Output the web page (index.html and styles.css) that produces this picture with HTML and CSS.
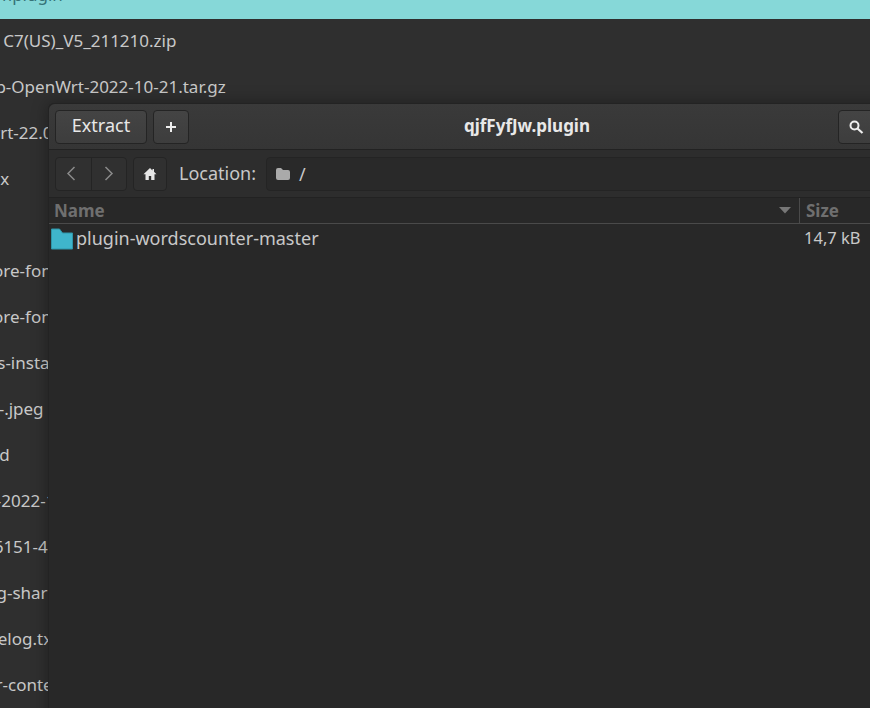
FILE: index.html
```html
<!DOCTYPE html>
<html lang="en">
  <head>
    <meta charset="UTF-8" />
    <title>qjfFyfJw.plugin</title>
    <link rel="stylesheet" href="styles.css">
  </head>
  <body>
    <!-- file manager behind the dialog -->
    <div class="files">
      <div class="file selected">Telecomplugin</div>
      <div class="file">Archer C7(US)_V5_211210.zip</div>
      <div class="file">ipk-app-OpenWrt-2022-10-21.tar.gz</div>
      <div class="file">openwrt-22.03.2-x86</div>
      <div class="file">mylinux</div>
      <div class="file"></div>
      <div class="file">rpm-core-fonts-a</div>
      <div class="file">rpm-core-fonts-b</div>
      <div class="file">addons-installer</div>
      <div class="file">screen-.jpeg</div>
      <div class="file">Android</div>
      <div class="file">image-2022-10-21</div>
      <div class="file">photo6151-4852</div>
      <div class="file">logging-sharing</div>
      <div class="file">Changelog.txt</div>
      <div class="file">Docker-content</div>
    </div>

    <div class="window">
      <div class="headerbar">
        <button class="btn btn-text"><span class="lift">Extract</span></button>
        <button class="btn btn-icon">
          <svg width="12" height="12" viewBox="0 0 12 12"><path d="M5 1h2v4h4v2H7v4H5V7H1V5h4z" fill="#eee"/></svg>
        </button>
        <div class="title">qjfFyfJw.plugin</div>
        <button class="btn btn-search">
          <svg width="16" height="16" viewBox="0 0 16 16" fill="none" stroke="#eee"><circle cx="6.5" cy="6.5" r="4" stroke-width="2"/><path d="M9.5 9.5l5 4.5" stroke-width="2.2"/></svg>
        </button>
      </div>

      <div class="toolbar">
        <div class="nav-group">
          <button class="nav-btn nav-back">
            <svg width="10" height="15" viewBox="0 0 10 15" fill="none" stroke="#8a8a8a" stroke-width="1.5"><path d="M8.5 1L2 7.5 8.5 14"/></svg>
          </button>
          <button class="nav-btn">
            <svg width="10" height="15" viewBox="0 0 10 15" fill="none" stroke="#8a8a8a" stroke-width="1.5"><path d="M1.5 1L8 7.5 1.5 14"/></svg>
          </button>
        </div>
        <button class="nav-home">
          <svg width="14" height="14" viewBox="0 0 14 14"><path d="M7 1L0.5 7.2H2.5V13H5.8V9H8.2V13H11.5V7.2H13.5L11 4.8V2H9.5V3.4z" fill="#e6e6e6"/></svg>
        </button>
        <span class="location-label">Location:</span>
        <div class="location">
          <svg width="16" height="14" viewBox="0 0 16 14"><path d="M1 3a2 2 0 0 1 2-2h3l2 2h5a2 2 0 0 1 2 2v6a2 2 0 0 1-2 2H3a2 2 0 0 1-2-2z" fill="#aaa"/></svg>
          <span>/</span>
        </div>
      </div>

      <div class="columns">
        <div class="col-name">
          <span>Name</span>
          <svg width="12" height="7" viewBox="0 0 12 7"><path d="M0 0h12L6 6.5z" fill="#777"/></svg>
        </div>
        <div class="col-size">Size</div>
      </div>

      <div class="row">
        <div class="row-name">
          <svg width="22" height="22" viewBox="0 0 22 22"><path d="M0.5 1h8l3 4h10v16h-21z" fill="#3fb5cb" stroke="#2e95a8"/></svg>
          <span class="lift">plugin-wordscounter-master</span>
        </div>
        <div class="row-size"><span class="lift">14,7 kB</span></div>
      </div>
    </div>
  </body>
</html>
```

FILE: styles.css
```css
body {
  margin: 0;
  height: 708px;
  overflow: hidden;
  position: relative;
  background: #2f2f2f;
  font-family: "Noto Sans", sans-serif;
  font-size: 18px;
  color: #c8c8c8;
}

button {
  font: inherit;
  color: inherit;
  padding: 0;
}

.lift {
  margin-bottom: 3px;
}

.files {
  margin-top: -28px;
}

.file {
  height: 46px;
  line-height: 46px;
  font-size: 17px;
  text-indent: -54px;
  white-space: nowrap;
}

.file.selected {
  height: 47px;
  margin-bottom: -1px;
  background: #86d8d8;
  color: #357377;
}

.window {
  position: absolute;
  top: 103px;
  left: 48px;
  width: 956px;
  height: 640px;
  background: #282828;
  border-top: 1px solid #232323;
  border-left: 1px solid #232323;
  border-radius: 6px 6px 0 0;
  box-shadow: 0 0 16px rgba(0, 0, 0, 0.35);
}

.headerbar {
  height: 45px;
  display: flex;
  align-items: center;
  gap: 6px;
  padding: 0 6px;
  position: relative;
  background: linear-gradient(to bottom, #3a3a3a, #353535);
  border-bottom: 1px solid #222;
  border-radius: 6px 6px 0 0;
}

.btn {
  height: 34px;
  border: 1px solid #242424;
  border-radius: 4px;
  background: linear-gradient(to bottom, #444, #3d3d3d);
  color: #e8e8e8;
  display: flex;
  align-items: center;
  justify-content: center;
}

.btn-text {
  width: 92px;
}

.btn-icon {
  width: 36px;
}

.btn-search {
  width: 36px;
  position: absolute;
  left: 789px;
  top: 6px;
}

.title {
  position: absolute;
  left: 200px;
  right: 200px;
  top: 10px;
  text-align: center;
  font-size: 17px;
  font-weight: 700;
  color: #e8e8e8;
}

.toolbar {
  height: 47px;
  display: flex;
  align-items: center;
  padding: 0 6px;
  background: #2d2d2d;
  border-bottom: 1px solid #222;
}

.nav-group {
  display: flex;
  width: 72px;
  height: 34px;
  border: 1px solid #242424;
  border-radius: 4px;
  box-sizing: border-box;
  background: #303030;
}

.nav-btn {
  flex: 1;
  background: none;
  border: none;
  display: flex;
  align-items: center;
  justify-content: center;
}

.nav-back svg {
  margin-right: 4px;
}

.nav-btn + .nav-btn {
  border-left: 1px solid #242424;
}

.nav-home {
  width: 34px;
  height: 34px;
  margin-left: 6px;
  border: 1px solid #242424;
  border-radius: 4px;
  background: #303030;
  display: flex;
  align-items: center;
  justify-content: center;
}

.location-label {
  width: 78px;
  margin-left: 12px;
  margin-bottom: 1px;
}

.location {
  flex: 1;
  height: 34px;
  box-sizing: border-box;
  margin-left: 9px;
  padding-left: 8px;
  display: flex;
  align-items: center;
  gap: 8px;
  border: 1px solid #242424;
  border-radius: 4px;
  background: #292929;
}

.columns {
  height: 25px;
  display: flex;
  align-items: center;
  border-bottom: 1px solid #4a4a4a;
  font-size: 17px;
  font-weight: 700;
  color: #6f6f6f;
}

.col-name {
  width: 751px;
  height: 100%;
  box-sizing: border-box;
  padding: 0 8px 0 5px;
  display: flex;
  align-items: center;
  justify-content: space-between;
  border-right: 1px solid #4a4a4a;
}

.col-size {
  padding-left: 6px;
}

.row {
  display: flex;
  height: 30px;
  align-items: center;
}

.row-name {
  width: 752px;
  display: flex;
  align-items: center;
  gap: 3px;
  padding-left: 2px;
  box-sizing: border-box;
}

.row-size {
  display: flex;
  padding-left: 3px;
  font-size: 16.5px;
}
```
